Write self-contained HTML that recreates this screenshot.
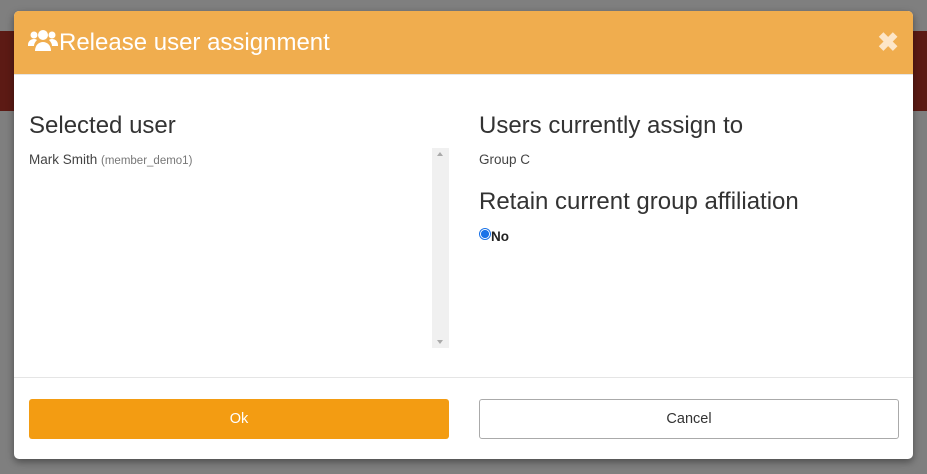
<!DOCTYPE html>
<html><head><style>
body{margin:0;width:927px;height:474px;background:#7f7f7f;position:relative;overflow:hidden;font-family:"Liberation Sans",sans-serif}
.band{position:absolute;left:0;top:31px;width:927px;height:80px;background:#5c1a14}
.m{position:absolute;left:14px;top:11px;width:899px;height:448px;background:#fff;border-radius:5px;overflow:hidden;box-shadow:0 3px 8px rgba(0,0,0,.4)}
.h{height:63px;background:#f0ad4e;border-bottom:1px solid #e6e6e6;position:relative}
.h .t{position:absolute;left:45px;top:18px;color:#fff;font-size:24px}
.x{position:absolute;right:14px;top:16px;color:#fde6c8;font-size:26px;font-weight:bold}
h3{position:absolute;margin:0;font-weight:normal;font-size:24px;color:#333}
.sm{position:absolute;font-size:13.5px;color:#444}
.sb{position:absolute;left:418px;top:137px;width:17px;height:200px;background:#f0f0f0}
.sep{position:absolute;left:0;top:366px;width:899px;height:1px;background:#e5e5e5}
.ok{position:absolute;left:15px;top:388px;width:420px;height:40px;background:#f39c12;border-radius:3px;color:#fff;text-align:center;line-height:40px;font-size:14.5px}
.cc{position:absolute;left:465px;top:388px;width:418px;height:38px;border:1px solid #aaa;border-radius:3px;color:#333;text-align:center;line-height:38px;font-size:14.5px}
</style></head><body>
<div class="band"></div>
<div class="m">
<div class="h">
<svg style="position:absolute;left:14px;top:18px" width="30" height="24" viewBox="0 0 30 24" fill="#fff"><circle cx="6" cy="6" r="3.5"/><circle cx="24" cy="6" r="3.5"/><circle cx="15" cy="6" r="5"/><path d="M0 16c0-4 3-6 6-6 2 0 3 1 3 1-2 2-3 4-3 6H0z"/><path d="M30 16c0-4-3-6-6-6-2 0-3 1-3 1 2 2 3 4 3 6h6z"/><path d="M7 22c0-6 4-9 8-9s8 3 8 9z"/></svg>
<div class="t">Release user assignment</div><div class="x">✖</div></div>
<h3 style="left:15px;top:101px">Selected user</h3>
<div class="sm" style="left:15px;top:141px">Mark Smith <span style="font-size:11.5px;color:#777">(member_demo1)</span></div>
<div class="sb"><div style="position:absolute;left:5px;top:4px;border:3px solid transparent;border-bottom:4px solid #aaa;border-top:0"></div><div style="position:absolute;left:5px;bottom:4px;border:3px solid transparent;border-top:4px solid #aaa;border-bottom:0"></div></div>
<h3 style="left:465px;top:101px">Users currently assign to</h3>
<div class="sm" style="left:465px;top:141px">Group C</div>
<h3 style="left:465px;top:177px">Retain current group affiliation</h3>
<div style="position:absolute;left:465px;top:217px;width:10px;height:10px;border-radius:50%;border:1px solid #1a73e8;background:radial-gradient(#1a73e8 55%,#fff 60%)"></div>
<div class="sm" style="left:477px;top:218px;font-weight:bold;color:#222">No</div>
<div class="sep"></div>
<div class="ok">Ok</div>
<div class="cc">Cancel</div>
</div>
</body></html>
